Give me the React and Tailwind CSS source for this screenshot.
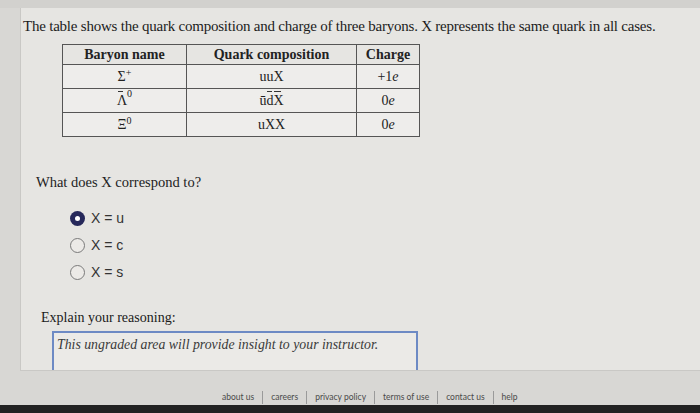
const serif = { fontFamily: '"Liberation Serif", "Times New Roman", serif' };

function Bar({ children, w = 'w-[5px]' }) {
  return (
    <span className="relative inline-block">
      {children}
      <span className={`absolute left-[1px] top-[-1px] ${w} h-[1px] bg-[#333]`} />
    </span>
  );
}

const rows = [
  { name: <>Σ<sup className="text-[10px]">+</sup></>, quark: 'uuX', charge: <>+1<i>e</i></> },
  {
    name: <><Bar>Λ</Bar><sup className="text-[10px] top-[-0.8em]">0</sup></>,
    quark: <>ū<Bar>d</Bar><Bar w="w-[7px]">X</Bar></>,
    charge: <>0<i>e</i></>,
  },
  { name: <>Ξ<sup className="text-[10px]">0</sup></>, quark: 'uXX', charge: <>0<i>e</i></> },
];

const options = ['X = u', 'X = c', 'X = s'];
const links = ['about us', 'careers', 'privacy policy', 'terms of use', 'contact us', 'help'];

function Radio({ checked }) {
  if (checked) {
    return (
      <span className="w-[15px] h-[15px] rounded-full bg-[#26285a] flex items-center justify-center">
        <span className="w-[5px] h-[5px] rounded-full bg-white" />
      </span>
    );
  }
  return <span className="w-[15px] h-[15px] rounded-full border-[1.5px] border-[#7a7a7a] bg-[#eceae7]" />;
}

export default function App() {
  return (
    <div className="w-[700px] h-[413px] bg-[#d8d7d4] flex flex-col overflow-hidden text-[#222]">
      <div className="h-[8px] bg-[#d2d1ce]" />

      <div className="ml-[20px] h-[363px] bg-[#e6e5e2] border-l border-b border-[#c9c8c5] overflow-hidden" style={serif}>
        <p className="mt-[8px] ml-[2px] text-[15px] leading-[20px] tracking-[-0.22px] text-[#1c1c1c]">
          The table shows the quark composition and charge of three baryons. X represents the same quark in all cases.
        </p>

        <table className="mt-[8px] ml-[41px] border-collapse border border-[#555] text-[14px]">
          <thead>
            <tr className="h-[20px]">
              <th className="w-[124px] border border-[#555] font-bold leading-[18px]">Baryon name</th>
              <th className="w-[170px] border border-[#555] font-bold leading-[18px]">Quark composition</th>
              <th className="w-[63px] border border-[#555] font-bold leading-[18px]">Charge</th>
            </tr>
          </thead>
          <tbody className="bg-[#eeedeb]">
            {rows.map((r, i) => (
              <tr key={i} className="h-[24px]">
                <td className="border border-[#555] text-center leading-[18px]">{r.name}</td>
                <td className="border border-[#555] text-center leading-[18px]">{r.quark}</td>
                <td className="border border-[#555] text-center leading-[18px]">{r.charge}</td>
              </tr>
            ))}
          </tbody>
        </table>

        <p className="mt-[35px] ml-[15px] text-[14.5px] leading-[20px]">What does X correspond to?</p>

        <div className="mt-[13px] ml-[49px] flex flex-col">
          {options.map((o, i) => (
            <div key={o} className="h-[27px] flex items-center gap-[6px]">
              <Radio checked={i === 0} />
              <span className="text-[14px] text-[#333]" style={{ fontFamily: '"Liberation Sans", Arial, sans-serif' }}>{o}</span>
            </div>
          ))}
        </div>

        <p className="mt-[22px] ml-[20px] text-[14px] leading-[20px] text-[#1a1a1a]">Explain your reasoning:</p>

        <div className="mt-[3px] ml-[31px] w-[366px] h-[60px] border-2 border-[#6d8ac4] bg-[#ebeae7] px-[3px] pt-[3px]">
          <p className="italic text-[13.8px] leading-[17px] text-[#3a3a3a]">
            This ungraded area will provide insight to your instructor.
          </p>
        </div>
      </div>

      <div className="h-[34px] flex items-end pb-[1px] pl-[214px]" style={{ fontFamily: 'Lato, "Open Sans", sans-serif' }}>
        {links.map((l, i) => (
          <span
            key={l}
            className={`px-[8px] h-[13px] flex items-center text-[8.5px] text-[#4a4a4a] ${i < links.length - 1 ? 'border-r border-[#9a9a9a]' : ''}`}
          >
            {l}
          </span>
        ))}
      </div>

      <div className="flex-1 bg-[#222]" />
    </div>
  );
}
